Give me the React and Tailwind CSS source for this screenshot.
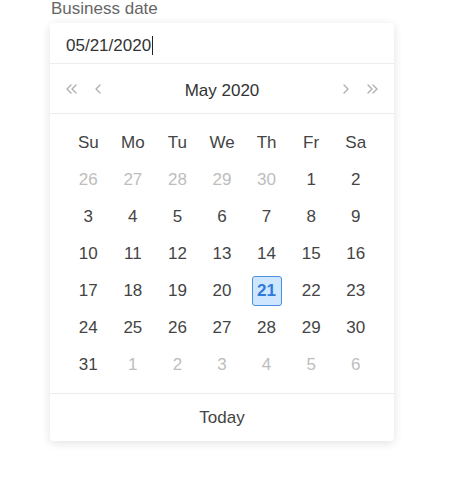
import React from "react";

const font = { fontFamily: '"Liberation Sans", Arial, sans-serif' };

function Chev({ dir = "left", double = false }) {
  const flip = dir === "right" ? "scale(-1,1) translate(-14,0)" : "";
  return (
    <svg width="14" height="12" viewBox="0 0 14 12" className="block">
      <g transform={flip} fill="none" stroke="#b0b0b0" strokeWidth="1.4" strokeLinecap="round" strokeLinejoin="round">
        {double ? (
          <>
            <path d="M6 2 L2 6 L6 10" />
            <path d="M11 2 L7 6 L11 10" />
          </>
        ) : (
          <path d="M9 2 L5 6 L9 10" />
        )}
      </g>
    </svg>
  );
}

export default function App() {
  const weeks = [
    [[26, 1], [27, 1], [28, 1], [29, 1], [30, 1], [1], [2]],
    [[3], [4], [5], [6], [7], [8], [9]],
    [[10], [11], [12], [13], [14], [15], [16]],
    [[17], [18], [19], [20], [21, 0, 1], [22], [23]],
    [[24], [25], [26], [27], [28], [29], [30]],
    [[31], [1, 1], [2, 1], [3, 1], [4, 1], [5, 1], [6, 1]],
  ];
  const days = ["Su", "Mo", "Tu", "We", "Th", "Fr", "Sa"];
  return (
    <div className="w-[474px] h-[504px] bg-white text-[17px] pt-[1px]" style={font}>
      <div className="pl-[51px] h-[22px] leading-[16px] text-[#666]">Business date</div>
      <div className="ml-[50px] w-[344px] bg-white rounded-[4px] shadow-[0_2px_10px_rgba(0,0,0,0.12)]">
        <div className="h-[41px] flex items-center pl-4 pt-[5px] border-b border-[#ececec] text-[#333]">
          <span>05/21/2020</span>
          <span className="inline-block w-px h-[19px] bg-[#222] ml-px"></span>
        </div>
        <div className="h-[50px] flex items-center px-[15px] border-b border-[#ececec]">
          <div className="flex items-center gap-[12px]">
            <Chev double />
            <Chev />
          </div>
          <div className="flex-1 text-center text-[#333] pt-[4px]">May 2020</div>
          <div className="flex items-center gap-[12px]">
            <Chev dir="right" />
            <Chev dir="right" double />
          </div>
        </div>
        <div className="px-4 py-[10px]">
          <div className="grid grid-cols-7 h-[37px] items-center text-center text-[#444]">
            {days.map((d) => (
              <div key={d}>{d}</div>
            ))}
          </div>
          {weeks.map((w, i) => (
            <div key={i} className="grid grid-cols-7 h-[37px] items-center text-center">
              {w.map(([n, muted, sel], j) => (
                <div key={j} className="flex justify-center">
                  {sel ? (
                    <span className="w-[30px] h-[30px] flex items-center justify-center border border-[#4a90e2] bg-[#cfe6ff] text-[#2f7ad8] font-bold rounded-[3px]">
                      {n}
                    </span>
                  ) : (
                    <span className={muted ? "text-[#bdbdbd]" : "text-[#444]"}>{n}</span>
                  )}
                </div>
              ))}
            </div>
          ))}
        </div>
        <div className="h-[48px] flex items-center justify-center border-t border-[#ececec] text-[#444]">
          Today
        </div>
      </div>
    </div>
  );
}
